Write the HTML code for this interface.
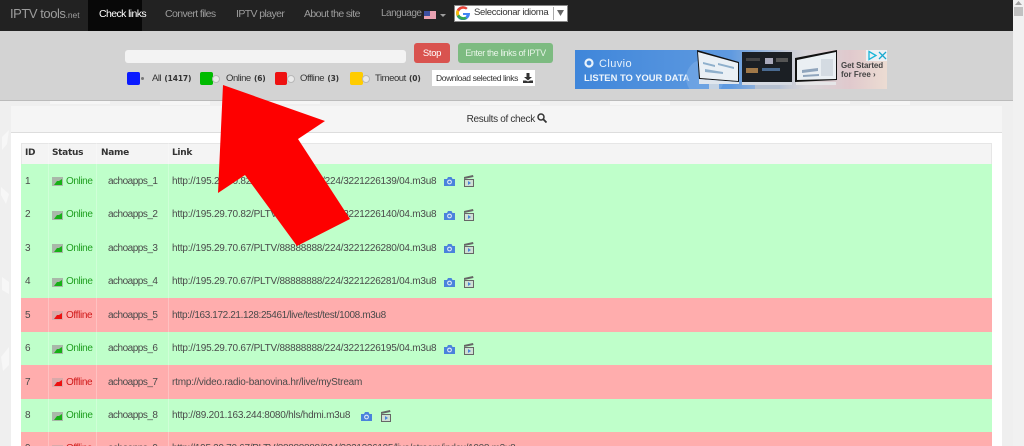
<!DOCTYPE html>
<html><head><meta charset="utf-8"><style>
*{box-sizing:border-box}
html,body{margin:0;padding:0;overflow:hidden}
body{width:1024px;height:446px;position:relative;background:#efefef;font-family:"Liberation Sans",sans-serif;font-size:10px;color:#444}
.a{position:absolute;white-space:nowrap}
#nav{left:0;top:0;width:1013px;height:31px;background:#222}
.n{top:7px;font-size:10.5px;color:#9d9d9d;line-height:14px;letter-spacing:-.6px}
#gray{left:0;top:31px;width:1013px;height:70px;background:#d3d3d3;border-bottom:1px solid #bbb}
.sq{top:72px;width:12.5px;height:13px;border-radius:2px}
.ra{top:74.500px;width:8px;height:8px;border-radius:50%;background:#e9e9e9;border:1px solid #b8b8b8}
.lb{top:72px;line-height:13px;font-size:9.5px;color:#333;letter-spacing:-.45px}
.lb b{font-family:"DejaVu Sans",sans-serif;font-size:7.5px;letter-spacing:-.15px;margin-left:1px}
#panel{left:11px;top:106px;width:991px;height:340px;background:#fff}
#ph{left:11px;top:106px;width:991px;height:27px;background:#f5f5f5;border-bottom:1px solid #ddd;text-align:center;line-height:27px;color:#333;font-size:10px;letter-spacing:-.32px;padding-left:1px}
#th{left:21px;top:143px;width:971px;height:21px;background:#f4f4f4;border:1px solid #e6e6e6;border-bottom:none}
.h{top:147px;font-family:"DejaVu Sans",sans-serif;font-weight:bold;font-size:9px;letter-spacing:-.3px;line-height:13px;color:#333}
.r{left:21px;width:971px}
.g{background:#bfffca}
.p{background:#ffadad}
.v{position:absolute;top:143px;width:1px;height:303px;background:rgba(255,255,255,.25)}
.t{line-height:14px;color:#4a4a4a;margin-top:1px;font-size:10px}
.nm{letter-spacing:-.5px}
.on{color:#1f9f1f;letter-spacing:-.4px}.off{color:#d01818;letter-spacing:-.35px}
.l1{letter-spacing:-.23px}
</style></head><body>
<div class="a" id="nav"></div>
<div class="a" style="left:88px;top:0;width:54px;height:31px;background:#080808"></div>
<div class="a" style="left:10px;top:5px;color:#9d9d9d;font-size:13px;letter-spacing:-.45px;line-height:18px">IPTV tools<span style="font-size:8.5px;letter-spacing:0">.net</span></div>
<div class="a n" style="left:99px;color:#fff">Check links</div>
<div class="a n" style="left:165px">Convert files</div>
<div class="a n" style="left:236px">IPTV player</div>
<div class="a n" style="left:304px">About the site</div>
<div class="a n" style="left:381px;font-size:10px;letter-spacing:-.5px">Language</div>
<svg class="a" style="left:424px;top:10px" width="22" height="10"><rect width="12" height="8" y="1" fill="#e8a0b0"/><rect width="6" height="5" y="1" fill="#3c4fa0"/><path d="M16 4h6l-3 3z" fill="#9d9d9d"/></svg>
<div class="a" style="left:454px;top:5px;width:114px;height:17px;background:#fff;border:1px solid #888"></div>
<svg class="a" style="left:456px;top:6px" width="14" height="14" viewBox="0 0 24 24"><path d="M22 12h-10v3.500h6c-.7 3-3 4.500-6 4.500a8 8 0 1 1 5.300-14l2.600-2.600A12 12 0 1 0 24 12z" fill="#4285f4"/><path d="M1.500 6.500l4 3a8 8 0 0 1 11.800-3.500l2.600-2.600A12 12 0 0 0 1.500 6.500z" fill="#ea4335"/><path d="M1.500 17.500l4-3a8 8 0 0 1 0-5l-4-3a12 12 0 0 0 0 11z" fill="#fbbc05"/><path d="M1.500 17.500a12 12 0 0 0 17.500 4l-3.500-3a8 8 0 0 1-10-4z" fill="#34a853"/></svg>
<div class="a" style="left:474px;top:6px;font-size:9.500px;letter-spacing:-.33px;line-height:14px;color:#333">Seleccionar idioma</div>
<div class="a" style="left:553px;top:7px;width:1px;height:13px;background:#aaa"></div>
<svg class="a" style="left:557px;top:10px" width="7" height="6"><path d="M0 0h7L3.500 6z" fill="#666"/></svg>

<div class="a" id="gray"></div>
<div class="a" style="left:125px;top:50px;width:281px;height:13px;background:#f3f3f3;border-radius:3px"></div>
<div class="a" style="left:414px;top:43px;width:36px;height:20px;background:#d9534f;border-radius:3px;color:#fff;text-align:center;font-size:9.500px;letter-spacing:-.3px;line-height:21px">Stop</div>
<div class="a" style="left:458px;top:43px;width:95px;height:20px;background:#7dbb81;border-radius:3px;color:#e8f5e8;text-align:center;font-size:9px;letter-spacing:-.4px;line-height:21px">Enter the links of IPTV</div>

<div class="a sq" style="left:127px;background:#0a1aff"></div><div class="a" style="left:141px;top:77px;width:3px;height:3px;border-radius:50%;background:#777"></div>
<div class="a lb" style="left:152px">All <b>(1417)</b></div>
<div class="a sq" style="left:200px;background:#00bb00"></div><div class="a ra" style="left:212px"></div>
<div class="a lb" style="left:226px">Online <b>(6)</b></div>
<div class="a sq" style="left:274.500px;background:#ee1111"></div><div class="a ra" style="left:287px"></div>
<div class="a lb" style="left:300px">Offline <b>(3)</b></div>
<div class="a sq" style="left:350px;background:#ffcc00"></div><div class="a ra" style="left:362px"></div>
<div class="a lb" style="left:375px">Timeout <b>(0)</b></div>
<div class="a" style="left:432px;top:70px;width:103px;height:16px;background:#fff;font-size:8.5px;letter-spacing:-.4px;line-height:16px;padding-left:4px;color:#333">Download selected links</div>
<svg class="a" style="left:523px;top:73px" width="10" height="10" viewBox="0 0 10 10"><path d="M3.500 0h3v4h2.500L5 7.500 1 4h2.500zM0 7.500h3l2 1 2-1h3V10H0z" fill="#333"/></svg>

<!-- ad -->
<svg class="a" style="left:575px;top:50px" width="312" height="39" viewBox="0 0 312 39">
<defs><linearGradient id="ag" x1="0" x2="1"><stop offset="0" stop-color="#3f86da"/><stop offset=".5" stop-color="#5f9ae0"/><stop offset=".68" stop-color="#c5cad6"/><stop offset=".74" stop-color="#d8d6da"/><stop offset=".88" stop-color="#e0c9cd"/><stop offset="1" stop-color="#ecdcd2"/></linearGradient></defs>
<rect width="312" height="39" fill="url(#ag)"/>
<circle cx="14" cy="13" r="3.500" fill="none" stroke="#e8f2fb" stroke-width="2.200"/>
<text x="24" y="17" font-family="Liberation Sans" font-size="11" fill="#e8f2fb" letter-spacing=".4">Cluvio</text>
<text x="9" y="31" font-family="Liberation Sans" font-size="9.400" font-weight="bold" fill="#eef5fc">LISTEN TO YOUR DATA</text>
<circle cx="130" cy="28" r="19" fill="#7fb0e8" opacity=".5"/>
<path d="M122 0l42 12v20l-40-3z" fill="#111"/><path d="M123 2l40 11v18l-38-3z" fill="#eaf0f5"/>
<path d="M128 12l12 3v2l-12-3zM143 13l16 4v2l-16-4zM130 19l18 3v2l-18-2z" fill="#8fb0cc"/>
<path d="M124 29l40 3v2l-40 0z" fill="#dfe6ee"/>
<rect x="134" y="34" width="10" height="5" fill="#c5d3e3"/>
<rect x="167" y="2" width="50" height="30" fill="#1b1f24"/>
<rect x="171" y="18" width="12" height="5" fill="#a07848"/><rect x="187" y="18" width="18" height="3" fill="#4a6a90"/><rect x="190" y="8" width="8" height="6" fill="#aab"/><rect x="171" y="8" width="14" height="3" fill="#444"/><rect x="201" y="8" width="12" height="4" fill="#555"/>
<rect x="167" y="32" width="50" height="3" fill="#d5dae2"/>
<rect x="180" y="35" width="25" height="4" fill="#b5c0d0"/>
<path d="M220 32l0-24 42-8v30z" fill="#111"/><path d="M222 30l0-20 39-8v27z" fill="#eaeff3"/>
<path d="M227 20l16-2v3l-16 2zM228 25l16-1v2l-16 1z" fill="#90a5bc"/><path d="M246 9h12v17h-12z" fill="#d4dbe2"/>
<rect x="221" y="32" width="40" height="3" fill="#e6e6e8"/>
<text x="266" y="18" font-family="Liberation Sans" font-size="8" font-weight="bold" letter-spacing="-.1" fill="#444">Get Started</text>
<text x="266" y="27" font-family="Liberation Sans" font-size="8" font-weight="bold" fill="#444">for Free ›</text>
<rect x="291" y="0" width="21" height="11" fill="#eef1f4"/>
<path d="M294 1.500l7 4-7 4z" fill="none" stroke="#19b6d8" stroke-width="1.300"/>
<path d="M304 2l7 7m0-7l-7 7" stroke="#19a9d0" stroke-width="1.300"/>
</svg>

<!-- faint bg pattern -->
<svg class="a" style="left:0;top:101px" width="1013" height="6"><path d="M50 0h60v3H50zM160 0h50v4h-50zM230 0h90v3h-90zM470 0h70v4h-70zM610 0h60v4h-60zM780 0h70v3h-70zM870 0h40v4h-40z" fill="#fff" opacity=".45"/></svg>
<svg class="a" style="left:0;top:107px" width="11" height="339"><path d="M2 30l7-7-2 14-5 6zM1 80l8 7-3 10-5-9zM2 170l7 5v12l-7-4zM1 250l8-10v18l-6 6z" fill="#fff" opacity=".5"/></svg>

<div class="a" id="panel"></div>
<div class="a" id="ph">Results of check&nbsp;<svg width="10" height="10" viewBox="0 0 10 10" style="vertical-align:-1px"><circle cx="4" cy="4" r="3" fill="none" stroke="#333" stroke-width="1.500"/><path d="M6.300 6.300L9.500 9.500" stroke="#333" stroke-width="1.800"/></svg></div>
<div class="a" id="th"></div>
<div class="a h" style="left:25px">ID</div>
<div class="a h" style="left:52px">Status</div>
<div class="a h" style="left:101px">Name</div>
<div class="a h" style="left:172px">Link</div>

<div class="a r g" style="top:164px;height:33.500px"></div>
<div class="a r g" style="top:197.500px;height:33.500px"></div>
<div class="a r g" style="top:231px;height:33.500px"></div>
<div class="a r g" style="top:264.500px;height:33.500px"></div>
<div class="a r p" style="top:298px;height:33.500px"></div>
<div class="a r g" style="top:331.500px;height:33.500px"></div>
<div class="a r p" style="top:365px;height:33.500px"></div>
<div class="a r g" style="top:398.500px;height:33.500px"></div>
<div class="a r p" style="top:432px;height:14px"></div>
<div class="v" style="left:48px"></div><div class="v" style="left:96px"></div><div class="v" style="left:168px"></div>

<svg width="0" height="0" style="position:absolute"><defs>
<g id="ong"><rect width="11" height="9" fill="#a9b8a9"/><path d="M2 8l3-4 2 0 3-2v6z" fill="#17b017"/></g>
<g id="off"><rect width="11" height="9" fill="#d9a9a9"/><path d="M2 8l3-4 2 0 3-2v6z" fill="#ee1010"/></g>
<g id="cam"><path d="M0 4h3l1-2h3.500l1 2H11v7H0z" fill="#4a82dc"/><circle cx="5.500" cy="7" r="2.400" fill="#dfe9f7"/><circle cx="5.500" cy="7" r="1.300" fill="#4a82dc"/></g>
<g id="cl"><path d="M1 4h10v8H1z" fill="#666"/><path d="M2 5h8v6H2z" fill="#cfe0d4"/><path d="M5 6l3 2-3 2z" fill="#4a86d8"/><path d="M1 2l9-2 .5 2-9.500 2z" fill="#666"/></g>
</defs></svg>

<div class="a t" style="left:25px;top:174px">1</div><svg class="a" style="left:52px;top:177px" width="11" height="9"><use href="#ong"/></svg><div class="a t on" style="left:66px;top:174px">Online</div><div class="a t nm" style="left:108px;top:174px">achoapps_1</div><div class="a t l1" style="left:172px;top:174px">http://195.29.70.82/PLTV/88888888/224/3221226139/04.m3u8</div>
<div class="a t" style="left:25px;top:207px">2</div><svg class="a" style="left:52px;top:211px" width="11" height="9"><use href="#ong"/></svg><div class="a t on" style="left:66px;top:207px">Online</div><div class="a t nm" style="left:108px;top:207px">achoapps_2</div><div class="a t l1" style="left:172px;top:207px">http://195.29.70.82/PLTV/88888888/224/3221226140/04.m3u8</div>
<div class="a t" style="left:25px;top:241px">3</div><svg class="a" style="left:52px;top:244px" width="11" height="9"><use href="#ong"/></svg><div class="a t on" style="left:66px;top:241px">Online</div><div class="a t nm" style="left:108px;top:241px">achoapps_3</div><div class="a t l1" style="left:172px;top:241px">http://195.29.70.67/PLTV/88888888/224/3221226280/04.m3u8</div>
<div class="a t" style="left:25px;top:274px">4</div><svg class="a" style="left:52px;top:278px" width="11" height="9"><use href="#ong"/></svg><div class="a t on" style="left:66px;top:274px">Online</div><div class="a t nm" style="left:108px;top:274px">achoapps_4</div><div class="a t l1" style="left:172px;top:274px">http://195.29.70.67/PLTV/88888888/224/3221226281/04.m3u8</div>
<div class="a t" style="left:25px;top:308px">5</div><svg class="a" style="left:52px;top:311px" width="11" height="9"><use href="#off"/></svg><div class="a t off" style="left:66px;top:308px">Offline</div><div class="a t nm" style="left:108px;top:308px">achoapps_5</div><div class="a t" style="left:172px;top:308px;letter-spacing:-.38px">http://163.172.21.128:25461/live/test/test/1008.m3u8</div>
<div class="a t" style="left:25px;top:341px">6</div><svg class="a" style="left:52px;top:345px" width="11" height="9"><use href="#ong"/></svg><div class="a t on" style="left:66px;top:341px">Online</div><div class="a t nm" style="left:108px;top:341px">achoapps_6</div><div class="a t l1" style="left:172px;top:341px">http://195.29.70.67/PLTV/88888888/224/3221226195/04.m3u8</div>
<div class="a t" style="left:25px;top:375px">7</div><svg class="a" style="left:52px;top:378px" width="11" height="9"><use href="#off"/></svg><div class="a t off" style="left:66px;top:375px">Offline</div><div class="a t nm" style="left:108px;top:375px">achoapps_7</div><div class="a t" style="left:172px;top:375px;letter-spacing:-.2px">rtmp://video.radio-banovina.hr/live/myStream</div>
<div class="a t" style="left:25px;top:408px">8</div><svg class="a" style="left:52px;top:412px" width="11" height="9"><use href="#ong"/></svg><div class="a t on" style="left:66px;top:408px">Online</div><div class="a t nm" style="left:108px;top:408px">achoapps_8</div><div class="a t l1" style="left:172px;top:408px">http://89.201.163.244:8080/hls/hdmi.m3u8</div>
<div class="a t" style="left:25px;top:442px;margin:0">9</div><svg class="a" style="left:52px;top:445px" width="11" height="9"><use href="#off"/></svg><div class="a t off" style="left:66px;top:442px;margin:0">Offline</div><div class="a t nm" style="left:108px;top:442px;margin:0">achoapps_9</div><div class="a t" style="left:172px;top:442px;margin:0;letter-spacing:-.3px">http://195.29.70.67/PLTV/88888888/224/3221226195/live/stream/index/1008.m3u8</div>

<svg class="a" style="left:444px;top:175px" width="12" height="12"><use href="#cam"/></svg><svg class="a" style="left:463px;top:175px" width="12" height="12"><use href="#cl"/></svg>
<svg class="a" style="left:444px;top:209px" width="12" height="12"><use href="#cam"/></svg><svg class="a" style="left:463px;top:209px" width="12" height="12"><use href="#cl"/></svg>
<svg class="a" style="left:444px;top:242px" width="12" height="12"><use href="#cam"/></svg><svg class="a" style="left:463px;top:242px" width="12" height="12"><use href="#cl"/></svg>
<svg class="a" style="left:444px;top:276px" width="12" height="12"><use href="#cam"/></svg><svg class="a" style="left:463px;top:276px" width="12" height="12"><use href="#cl"/></svg>
<svg class="a" style="left:444px;top:343px" width="12" height="12"><use href="#cam"/></svg><svg class="a" style="left:463px;top:343px" width="12" height="12"><use href="#cl"/></svg>
<svg class="a" style="left:361px;top:410px" width="12" height="12"><use href="#cam"/></svg><svg class="a" style="left:380px;top:410px" width="12" height="12"><use href="#cl"/></svg>

<!-- scrollbar -->
<div class="a" style="left:1013px;top:0;width:11px;height:446px;background:#f1f1f1"></div>
<div class="a" style="left:1014px;top:7px;width:9px;height:9px;background:#c1c1c1"></div>
<svg class="a" style="left:1015px;top:1px" width="7" height="4"><path d="M0 4l3.500-4L7 4z" fill="#a0a0a0"/></svg>

<!-- arrow -->
<svg class="a" style="left:0;top:0" width="1024" height="446"><path d="M223 85L325 121 298 139 350 219 297 246 245 175 218 193z" fill="#fe0000"/></svg>
</body></html>
